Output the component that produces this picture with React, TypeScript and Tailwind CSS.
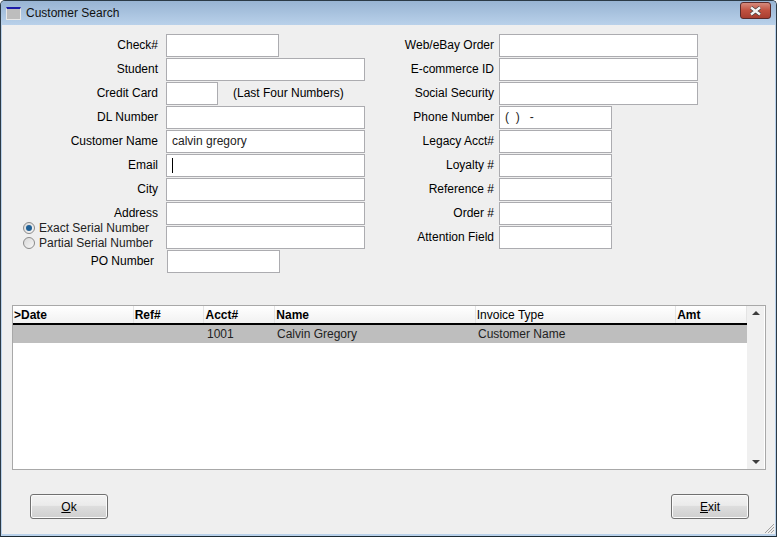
import React from "react"

function Field({ w, value, mono, caret }: { w: string; value?: string; mono?: boolean; caret?: boolean }) {
  return (
    <div className={`${w} h-[23px] shrink-0 bg-white border border-[#acacb0] pl-[5px] flex items-center text-[12px] text-[#222] whitespace-pre`}>
      {caret && <span className="w-px h-[15px] bg-black" />}
      {value}
    </div>
  )
}

function Row({ label, labelW, gap, children }: { label: string; labelW: string; gap: string; children: React.ReactNode }) {
  return (
    <div className={`flex items-center h-6 ${gap}`}>
      <div className={`${labelW} text-right text-[12px] text-black whitespace-nowrap`}>{label}</div>
      {children}
    </div>
  )
}

function Radio({ on, label }: { on?: boolean; label: string }) {
  return (
    <div className="flex items-center h-[15px] gap-[4px] text-[12px] text-[#222] whitespace-nowrap">
      <span className="w-[12px] h-[12px] rounded-full border border-[#8a8a8a] bg-gradient-to-br from-[#d8d8d8] to-[#f8f8f8] flex items-center justify-center">
        {on && <span className="w-[6px] h-[6px] rounded-full bg-[#1f5f95]" />}
      </span>
      {label}
    </div>
  )
}

function Btn({ first, rest }: { first: string; rest: string }) {
  return (
    <button className="w-[78px] h-[25px] rounded-[3px] border border-[#707070] bg-[linear-gradient(#f2f2f2_0%,#ebebeb_45%,#dddddd_50%,#cfcfcf_100%)] text-[12px] text-black shadow-[inset_0_0_0_1px_#fbfbfb]">
      <span className="underline">{first}</span>{rest}
    </button>
  )
}

const columns = [
  { text: ">Date", w: "w-[121px]", bold: true },
  { text: "Ref#", w: "w-[71px]", bold: true },
  { text: "Acct#", w: "w-[71px]", bold: true },
  { text: "Name", w: "w-[201px]", bold: true },
  { text: "Invoice Type", w: "w-[201px]", bold: false },
  { text: "Amt", w: "w-[71px]", bold: true },
]

export default function App() {
  return (
    <div className="w-[777px] h-[537px] flex flex-col overflow-hidden rounded-t-[5px] border border-[#2b3a46] border-b-[#1c2a33] bg-[#b9d1ea] font-['Liberation_Sans',sans-serif]">
      {/* title bar */}
      <div className="h-6 shrink-0 flex items-center pl-[5px] pr-[5px] bg-gradient-to-b from-[#98b4d3] to-[#b9d1ea]">
        <div className="w-[15px] h-[13px] bg-[#bdbdbd] border border-[#e8e8e8] border-t-2 border-t-[#1c1ca8]" />
        <span className="ml-[5px] text-[12px] text-[#111]">Customer Search</span>
        <div className="ml-auto w-[31px] h-[17px] -mt-[5px] rounded-[3px] border border-[#5a2a2a] bg-gradient-to-b from-[#d58a7c] via-[#c0503f] to-[#a83e30] flex items-center justify-center">
          <svg width="13" height="10" viewBox="0 0 13 10">
            <path d="M2 1.5 L11 8.5 M11 1.5 L2 8.5" stroke="#3a3a3a" strokeWidth="3.6" />
            <path d="M2 1.5 L11 8.5 M11 1.5 L2 8.5" stroke="#f4f4f4" strokeWidth="2.4" />
          </svg>
        </div>
      </div>

      {/* body */}
      <div className="relative flex-1 min-h-0 mx-[1px] mb-[2px] bg-[#efefef] flex flex-col pt-[8px] pl-[10px] pr-[9px]">
        <div className="flex h-[272px] shrink-0">
          <div className="w-[353px]">
            <Row label="Check#" labelW="w-[146px]" gap="gap-[8px]"><Field w="w-[113px]" /></Row>
            <Row label="Student" labelW="w-[146px]" gap="gap-[8px]"><Field w="w-[199px]" /></Row>
            <Row label="Credit Card" labelW="w-[146px]" gap="gap-[8px]">
              <Field w="w-[52px]" />
              <span className="ml-[7px] text-[12px] text-black whitespace-nowrap">(Last Four Numbers)</span>
            </Row>
            <Row label="DL Number" labelW="w-[146px]" gap="gap-[8px]"><Field w="w-[199px]" /></Row>
            <Row label="Customer Name" labelW="w-[146px]" gap="gap-[8px]"><Field w="w-[199px]" value="calvin gregory" /></Row>
            <Row label="Email" labelW="w-[146px]" gap="gap-[8px]"><Field w="w-[199px]" caret /></Row>
            <Row label="City" labelW="w-[146px]" gap="gap-[8px]"><Field w="w-[199px]" /></Row>
            <Row label="Address" labelW="w-[146px]" gap="gap-[8px]"><Field w="w-[199px]" /></Row>
            <div className="flex items-center h-6 gap-[8px]">
              <div className="w-[146px] pl-[11px] flex flex-col -mt-[4px]">
                <Radio on label="Exact Serial Number" />
                <Radio label="Partial Serial Number" />
              </div>
              <Field w="w-[199px]" />
            </div>
            <Row label="PO Number" labelW="w-[142px]" gap="gap-[13px]"><Field w="w-[113px]" /></Row>
          </div>
          <div className="flex-1">
            <Row label="Web/eBay Order" labelW="w-[129px]" gap="gap-[5px]"><Field w="w-[199px]" /></Row>
            <Row label="E-commerce ID" labelW="w-[129px]" gap="gap-[5px]"><Field w="w-[199px]" /></Row>
            <Row label="Social Security" labelW="w-[129px]" gap="gap-[5px]"><Field w="w-[199px]" /></Row>
            <Row label="Phone Number" labelW="w-[129px]" gap="gap-[5px]"><Field w="w-[113px]" value="(  )   -" /></Row>
            <Row label="Legacy Acct#" labelW="w-[129px]" gap="gap-[5px]"><Field w="w-[113px]" /></Row>
            <Row label="Loyalty #" labelW="w-[129px]" gap="gap-[5px]"><Field w="w-[113px]" /></Row>
            <Row label="Reference #" labelW="w-[129px]" gap="gap-[5px]"><Field w="w-[113px]" /></Row>
            <Row label="Order #" labelW="w-[129px]" gap="gap-[5px]"><Field w="w-[113px]" /></Row>
            <Row label="Attention Field" labelW="w-[129px]" gap="gap-[5px]"><Field w="w-[113px]" /></Row>
          </div>
        </div>

        {/* results table */}
        <div className="h-[165px] shrink-0 border border-[#a8a8a8] bg-white flex">
          <div className="flex-1 min-w-0 flex flex-col">
            <div className="h-[19px] flex items-center border-b-2 border-b-black bg-gradient-to-b from-white to-[#f1f1f1] text-[12px] text-black">
              {columns.map((c) => (
                <div key={c.text} className={`${c.w} h-full pl-[1px] flex items-center border-r border-[#e4e4e4] ${c.bold ? "font-bold" : ""}`}>{c.text}</div>
              ))}
            </div>
            <div className="h-[18px] flex items-center bg-[#bebebe] text-[12px] text-[#222]">
              <div className="w-[195px] ml-[-1px]" />
              <div className="w-[70px]">1001</div>
              <div className="w-[201px]">Calvin Gregory</div>
              <div>Customer Name</div>
            </div>
          </div>
          <div className="w-[17px] shrink-0 bg-[#f0f0f0] flex flex-col items-center justify-between py-[5px] mr-px">
            <div className="w-0 h-0 border-x-[4px] border-x-transparent border-b-[4px] border-b-[#3c3c3c]" />
            <div className="w-0 h-0 border-x-[4px] border-x-transparent border-t-[4px] border-t-[#3c3c3c]" />
          </div>
        </div>

        <div className="flex justify-between mt-[24px] pl-[18px] pr-[17px]">
          <Btn first="O" rest="k" />
          <Btn first="E" rest="xit" />
        </div>

        <svg className="absolute right-0 bottom-0" width="12" height="12" viewBox="0 0 12 12">
          <path d="M11 2 L2 11 M11 5 L5 11 M11 8 L8 11" stroke="#a0a0a0" strokeWidth="1" />
        </svg>
      </div>
    </div>
  )
}
